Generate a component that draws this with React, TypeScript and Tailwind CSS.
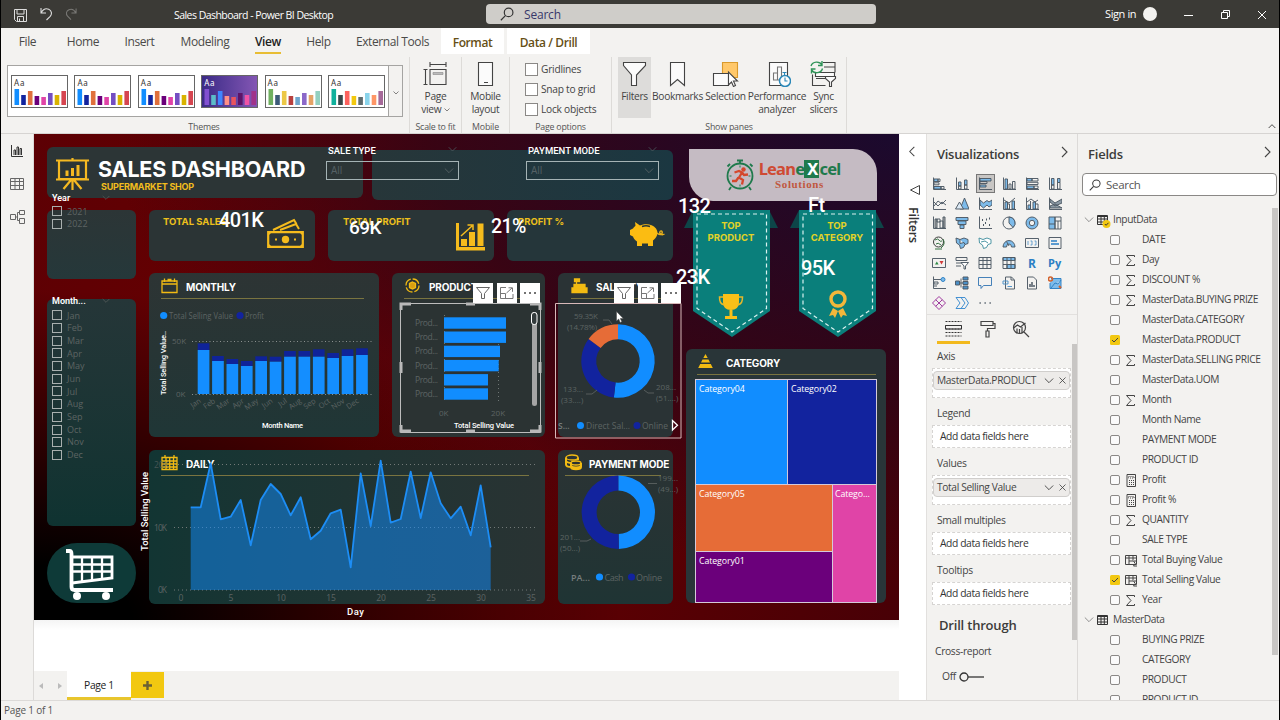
import type { ReactNode } from "react";

const tabs = [
  { label: "File", box: "w-[53px]" },
  { label: "Home", box: "w-[58px]" },
  { label: "Insert", box: "w-[55px]" },
  { label: "Modeling", box: "w-[76px]" },
  { label: "View", box: "w-[50px]" },
  { label: "Help", box: "w-[51px]" },
  { label: "External Tools", box: "w-[97px]" },
];

const classic = ["#118dff", "#12239e", "#e0703c", "#6b007b", "#e044a7", "#744ec2", "#d9b300", "#d64550"];
const themes = [
  { bg: "bg-white text-[#333]", bars: classic },
  { bg: "bg-white text-[#333]", bars: classic },
  { bg: "bg-white text-[#333]", bars: classic },
  { bg: "bg-gradient-to-r from-[#3b2a86] to-[#8456b4] text-white", bars: ["#8250d0", "#5bbcc9", "#3f86ff", "#ff8f86", "#e8545f", "#5c1368", "#f052a5", "#a0338a"] },
  { bg: "bg-white text-[#333]", bars: ["#70b060", "#3c5a78", "#ecc846", "#b8403f", "#6fa5cc", "#8b68c8", "#e5a367", "#93d0c0"] },
  { bg: "bg-white text-[#333]", bars: ["#10b09c", "#374649", "#fd625e", "#f2c80f", "#5f6b6d", "#8ad4eb", "#fe9666", "#a66999"] },
];
const themeHeights = [16, 10, 14, 9, 8, 12, 10, 14];

const Chevron = ({ d = "M1 3l5 5 5-5", size = 12, color = "#444" }: { d?: string; size?: number; color?: string }) => (
  <svg width={size} height={size} viewBox="0 0 12 12" fill="none" stroke={color} strokeWidth="1.1">
    <path d={d} />
  </svg>
);

const SearchIcon = ({ size = 13 }: { size?: number }) => (
  <svg width={size} height={size} viewBox="0 0 13 13" fill="none" stroke="#333" strokeWidth="1.1">
    <circle cx="8" cy="5" r="4" />
    <path d="M5 8L.8 12.3" />
  </svg>
);

function TitleBar() {
  return (
    <div className="flex h-7 items-center bg-[#3b3a36] text-[11px] text-white">
      <svg className="mt-0.5 ml-[13px]" width="13" height="13" viewBox="0 0 13 13" fill="none" stroke="#ddd" strokeWidth="1">
        <path d="M.5.5h12v12h-10l-2-2zM3 .5v4.500h7V.5M3.500 12.500v-5h6v5M5.500 12.500v-3" />
      </svg>
      <svg className="ml-[13px]" width="13" height="14" viewBox="0 0 13 14" fill="none" stroke="#ddd" strokeWidth="1.100">
        <path d="M1 1v5h5M1.300 5.700C3 2.500 6 1.200 8.700 2.300c3 1.300 3.600 4.600 1.500 7L6.500 13" />
      </svg>
      <svg className="ml-3" width="12" height="14" viewBox="0 0 13 14" fill="none" stroke="#7a7976" strokeWidth="1.100">
        <path d="M12 1v5H7M11.700 5.700C10 2.500 7 1.200 4.300 2.300c-3 1.300-3.600 4.600-1.500 7L6.500 13" />
      </svg>
      <span className="mt-[3px] ml-[97px] w-[312px] text-[10.500px] tracking-[-0.54px]">Sales Dashboard - Power BI Desktop</span>
      <div className="flex h-5 w-[390px] items-center gap-2.5 rounded-sm bg-[#cfcdc9] pl-3.5 text-xs text-[#38386a]">
        <SearchIcon size={14} />
        <span className="mt-px tracking-[-0.2px]">Search</span>
      </div>
      <span className="ml-[229px] w-[38px] tracking-[-0.4px]">Sign in</span>
      <span className="h-3.5 w-3.5 rounded-full bg-[#f3f2f0]" />
      <svg className="ml-[27px]" width="84" height="12" viewBox="0 0 84 12" fill="none" stroke="#fff">
        <path d="M0 7.500h9M37.500 4.500h6v6h-6zM39.500 4.500v-2h6v6h-2M74 3l8 8M82 3l-8 8" />
      </svg>
    </div>
  );
}

function TabRow() {
  return (
    <div className="flex h-[26px] text-[12px] tracking-[-0.4px] text-[#4a4a48]">
      {tabs.map((t) => (
        <div key={t.label} className={`flex justify-center pt-[5px] ${t.box} ${t.label === "View" ? "font-semibold text-[#222]" : ""}`}>
          <span className={t.label === "View" ? "border-b-2 border-[#e8bd34] whitespace-nowrap" : "whitespace-nowrap"}>{t.label}</span>
        </div>
      ))}
      <div className="flex w-[63px] justify-center bg-white pt-[6px] font-semibold text-[#665016]">Format</div>
      <div className="ml-[3px] flex w-[83px] justify-center bg-white pt-[6px] font-semibold text-[#665016]">Data / Drill</div>
    </div>
  );
}

function ThemeGallery() {
  return (
    <div className="flex h-[52px] w-[396px] border border-[#a5a4a2] bg-white">
      <div className="flex flex-1 items-center gap-[6.400px] pl-[3px]">
        {themes.map((t, i) => (
          <div key={i} className={`flex h-[33px] w-[57px] flex-col border border-[#666] px-0.5 ${t.bg}`}>
            <span className="mt-0.5 h-[11px] font-[Noto_Sans] text-[8px] leading-[10px] tracking-[0.8px]">Aa</span>
            <svg width="53" height="16" viewBox="0 0 53 16">
              {t.bars.map((c, j) => (
                <rect key={j} x={j * 6.7 + 0.5} y={16 - themeHeights[j]} width="4.600" height={themeHeights[j]} fill={c} />
              ))}
            </svg>
          </div>
        ))}
      </div>
      <div className="flex w-[14px] items-center justify-center border-l border-[#a5a4a2] bg-[#f3f2f0] pt-1">
        <Chevron size={6} color="#222" />
      </div>
    </div>
  );
}

function RibbonGroup({ label, box, children }: { label: string; box: string; children: ReactNode }) {
  return (
    <div className={`flex h-[76px] flex-col border-r border-[#dddbd8] ${box}`}>
      <div className="flex h-[66px] justify-center">{children}</div>
      <div className="text-center text-[8.800px] leading-3 tracking-[-0.2px] text-[#555]">{label}</div>
    </div>
  );
}

function RibbonButton({ icon, lines, box }: { icon: ReactNode; lines: ReactNode[]; box: string }) {
  return (
    <div className={`flex h-[61px] shrink-0 flex-col items-center pt-[3px] text-[10.200px] leading-[13px] tracking-[-0.3px] text-[#444] ${box}`}>
      <svg className="mb-[3px] shrink-0" width="27" height="27" viewBox="0 0 27 27" fill="none" stroke="#444" strokeWidth="1.100">
        {icon}
      </svg>
      {lines.map((l, i) => (
        <span key={i} className="whitespace-nowrap">{l}</span>
      ))}
    </div>
  );
}

function Ribbon() {
  return (
    <div className="flex h-20 border-b border-[#d6d4d2] pt-[3px] pl-[6px]">
      <div className="flex h-[76px] w-[403px] flex-col border-r border-[#dddbd8]">
        <div className="flex h-[66px] pt-[8px]">
          <ThemeGallery />
        </div>
        <div className="pr-2 text-center text-[8.800px] leading-3 tracking-[-0.2px] text-[#555]">Themes</div>
      </div>
      <RibbonGroup label="Scale to fit" box="w-[52px]">
        <RibbonButton
          box=""
          lines={["Page", <>view <span className="inline-block"><Chevron size={6} color="#222" /></span></>]}
          icon={
            <>
              <path d="M8 9.500h16v15H8zM8 4.500h16M8 2v5M24 2v5M3.500 9.500v15M1.500 9.500h4M1.500 24.500h4" />
              <path d="M11 12.500h10v2H11z" fill="#bbb" stroke="#888" strokeWidth=".6" />
            </>
          }
        />
      </RibbonGroup>
      <RibbonGroup label="Mobile" box="w-[48px]">
        <RibbonButton
          box=""
          lines={["Mobile", "layout"]}
          icon={<path d="M6.500 2.500h14v23h-14zM12 22.500h4" fill="#fbfbfb" />}
        />
      </RibbonGroup>
      <RibbonGroup label="Page options" box="w-[102px]">
        <div className="ml-[7px] flex w-[78px] flex-col gap-[7px] pt-[6px] text-[10.200px] tracking-[-0.25px] text-[#444]">
          {["Gridlines", "Snap to grid", "Lock objects"].map((l) => (
            <div key={l} className="flex h-[13px] items-center gap-[3px] whitespace-nowrap">
              <span className="h-[13px] w-[13px] shrink-0 border border-[#8a8886] bg-white" />
              {l}
            </div>
          ))}
        </div>
      </RibbonGroup>
      <RibbonGroup label="Show panes" box="w-[235px]">
        <RibbonButton
          box="w-[33px] bg-[#dddcda]"
          lines={["Filters"]}
          icon={<path d="M2.500 2.500h22v3l-9 9.500v10.500h-5V15l-8-9.500z" fill="#fbfbfb" />}
        />
        <RibbonButton box="w-[53px]" lines={["Bookmarks"]} icon={<path d="M6.500 2.500h14v23l-7-6-7 6z" fill="#fbfbfb" />} />
        <RibbonButton
          box="w-[43px]"
          lines={["Selection"]}
          icon={
            <>
              <path d="M10.500 2.500h15v15h-15z" fill="#ffc86a" stroke="#d99a2c" />
              <path d="M1.500 13.500h15v12h-15z" fill="#fbfbfb" />
              <path d="M16.500 12v13l3-3 2 4.500 2-1-2-4.500h4z" fill="#fff" />
            </>
          }
        />
        <RibbonButton
          box="w-[60px]"
          lines={["Performance", "analyzer"]}
          icon={
            <>
              <path d="M5.500 2.500h18v23h-18z" fill="#fbfbfb" />
              <path d="M9.500 20v-7h4v7zM13.500 20V7h4v13z" stroke="#777" />
              <path d="M20.500 13v2M18.500 12.500h4" stroke="#2b88b8" />
              <circle cx="21" cy="21" r="5.500" fill="#fbfbfb" stroke="#2b88b8" strokeWidth="1.500" />
              <path d="M21 17.500V21h2.500" stroke="#2b88b8" />
            </>
          }
        />
        <RibbonButton
          box="w-[33px]"
          lines={["Sync", "slicers"]}
          icon={
            <>
              <path d="M13 2.500h12v10M2.500 14.500v11h13M25 7H14M6 18.500h9" />
              <path d="M5.500 12.500h19v4h-19z" fill="#fbfbfb" />
              <path d="M15.500 16.500h10v2l-4 3.500v4.500h-2V22l-4-3.500z" fill="#fbfbfb" />
              <path d="M1 6a6 5.500 0 0 1 11-1M12 1v4.500H8M12.500 8.500a6 5.500 0 0 1-11 1.500M1.500 13.500V9H5.500" stroke="#2f9358" strokeWidth="1.400" />
            </>
          }
        />
      </RibbonGroup>
      <div className="flex flex-1 items-end justify-end pr-[3px] pb-[3px]">
        <Chevron size={8} d="M1 9l5-5 5 5" color="#111" />
      </div>
    </div>
  );
}

function LeftRail() {
  return (
    <div className="flex w-[33px] shrink-0 flex-col items-center gap-[19px] border-r border-[#dcdad8] pt-2.5">
      <svg width="14" height="14" viewBox="0 0 14 14" fill="none" stroke="#333">
        <path d="M1.500 1v11.500H13M4 11V6h1.500v5M7 11V3h1.500v8M10 11V4.500h1.500V11" />
      </svg>
      <svg width="14" height="14" viewBox="0 0 14 14" fill="none" stroke="#666">
        <path d="M.5 1.500h13v11H.5zM.5 4.500h13M.5 8.500h13M5 1.500v11M9.500 1.500v11" />
      </svg>
      <svg width="15" height="14" viewBox="0 0 15 14" fill="none" stroke="#666">
        <path d="M.5 4.500h5v5h-5zM9.500.5h5v4h-5zM9.500 8.500h5v5h-5zM5.500 7H7.500V2.500h2M7.500 7v3.500h2" />
      </svg>
    </div>
  );
}

/* ---------- report canvas ---------- */

const DIN = "font-[Roboto] text-white";

function Card({ at, children, tone = "bg-[#2b3435]" }: { at: string; children?: ReactNode; tone?: string }) {
  return <div className={`absolute rounded-md ${tone} ${at}`}>{children}</div>;
}

function CardTitle({ children, icon }: { children: ReactNode; icon: ReactNode }) {
  return (
    <div className="flex h-[26px] items-center gap-[8px] border-b border-[#7a7440] pt-[3px] font-[Inter] text-[10px] font-bold tracking-[-0.15px] whitespace-nowrap text-white">
      <svg className="-mt-[3px] shrink-0" width="17" height="17" viewBox="0 0 17 17" fill="none" stroke="#f2bb13" strokeWidth="1.300">
        {icon}
      </svg>
      {children}
    </div>
  );
}

function Slicer({ title, items, at, list }: { title: string; items: string[]; at: string; list: string }) {
  return (
    <div className={`absolute w-[66px] ${at}`}>
      <div className="flex items-center justify-between pr-2">
        <span className={`text-[9px] leading-3 font-semibold ${DIN}`}>{title}</span>
        <Chevron size={8} color="#59605f" />
      </div>
      <div className={`flex flex-col ${list}`}>
        {items.map((m) => (
          <div key={m} className="flex h-[12.700px] items-center gap-[5px] text-[9px] text-[#5d6463]">
            <span className="h-[10px] w-[10px] border border-[#a9b0af]" />
            {m}
          </div>
        ))}
      </div>
    </div>
  );
}

function DropSlicer({ title, at }: { title: string; at: string }) {
  return (
    <div className={`absolute w-[133px] ${at}`}>
      <div className="flex h-4 items-start justify-between pr-0.5 pl-0.5">
        <span className={`text-[9.500px] leading-3 font-medium ${DIN}`}>{title}</span>
        <Chevron size={9} color="#4d5a60" />
      </div>
      <div className="flex h-[19px] items-center justify-between border border-[#a5b3b5] pr-1 pl-1 text-[10px] text-[#566165]">
        All
        <Chevron size={10} color="#566165" />
      </div>
    </div>
  );
}

const light = [350, 361, 364, 366, 361, 361.7, 356.7, 356.7, 356.7, 358, 356, 355];
const dark = [343.3, 356, 359, 361, 356.3, 356.7, 351, 351, 349.3, 353, 349.3, 348.3];
const months = ["Jan", "Feb", "Mar", "Apr", "May", "Jun", "Jul", "Aug", "Sep", "Oct", "Nov", "Dec"];

function MonthlyChart() {
  return (
    <svg className="absolute top-0 left-0" width="230" height="164" viewBox="149 273 230 164" fontSize="8.500" fill="#5d6463">
      <circle cx="163.700" cy="315.500" r="3.600" fill="#118dff" />
      <text x="169" y="318.500" textLength="64" lengthAdjust="spacingAndGlyphs">Total Selling Value</text>
      <circle cx="240" cy="315.500" r="3.600" fill="#12239e" />
      <text x="245" y="318.500" textLength="19" lengthAdjust="spacingAndGlyphs">Profit</text>
      <text x="172" y="344" fontSize="8">50K</text>
      <text x="176" y="397" fontSize="8">0K</text>
      <path d="M192 341.500h182M192 394.500h182" stroke="#8a908f" strokeDasharray="1 2.500" />
      {light.map((y, i) => (
        <g key={i}>
          <rect x={197.700 + i * 14.400} y={dark[i]} width="11.700" height={y - dark[i]} fill="#0f2399" />
          <rect x={197.700 + i * 14.400} y={y} width="11.700" height={394 - y} fill="#148eff" />
        </g>
      ))}
      {months.map((m, i) => (
        <text key={m} x={201.500 + i * 14.350} y="402" textAnchor="end" fontSize="7.500" transform={`rotate(-35 ${201.500 + i * 14.350} 402)`}>{m}</text>
      ))}
      <g fill="#fff" fontFamily="Roboto" fontWeight="500">
        <text x="262" y="427.500" fontSize="7.500" textLength="41">Month Name</text>
        <text x="166" y="395" fontSize="7.500" textLength="64" transform="rotate(-90 166 395)">Total Selling Value..</text>
      </g>
    </svg>
  );
}

const productEnds = [506, 506, 500, 498.700, 488, 488];

function ProductChart() {
  return (
    <svg className="absolute top-0 left-0" width="153" height="164" viewBox="392 273 153 164" fontSize="8.500" fill="#5d6463">
      <path d="M444.500 315v86M498.500 344v60" stroke="#6f7675" strokeDasharray="1 3" />
      {productEnds.map((e, i) => (
        <g key={i}>
          <text x="415" y={326 + i * 14.200} textLength="23">Prod...</text>
          <rect x="444" y={317.300 + i * 14.200} width={e - 444} height="11.400" fill="#118dff" />
        </g>
      ))}
      <text x="439" y="415.500" fontSize="8">0K</text>
      <text x="491" y="415.500" fontSize="8">20K</text>
      <text x="454" y="428" fill="#fff" fontFamily="Roboto" fontWeight="500" fontSize="7.500" textLength="60">Total Selling Value</text>
      <rect x="532" y="312" width="5" height="94" rx="2.500" fill="#a5a5a5" />
      <rect x="531.500" y="312.500" width="5.500" height="12" rx="2.500" fill="#333b3c" stroke="#fff" />
      <path d="M400.500 303.500h140v129h-140z" fill="none" stroke="#bdbdbd" />
      <path d="M401 310v-6h10M530 304h10v6M540 425v6h-10M411 431h-10v-6M466 304h9M466 431h9M401 362v11M540 362v11" fill="none" stroke="#b9b9b9" strokeWidth="3" />
    </svg>
  );
}

// ring slice between two fractions of a full turn
function slice(cx: number, cy: number, from: number, to: number) {
  const pt = (f: number, r: number) => {
    const a = f * 2 * Math.PI - Math.PI / 2;
    return `${cx + r * Math.cos(a)} ${cy + r * Math.sin(a)}`;
  };
  const big = to - from > 0.5 ? 1 : 0;
  return `M${pt(from, 36.700)}A36.700 36.700 0 ${big} 1 ${pt(to, 36.700)}L${pt(to, 21.700)}A21.700 21.700 0 ${big} 0 ${pt(from, 21.700)}Z`;
}

function SaleTypeChart() {
  return (
    <svg className="absolute top-0 left-0 overflow-visible" width="115" height="164" viewBox="558 273 115 164" fontSize="8.500" fill="#5d6463">
      <path d="M555.500 303.500h125.500v134.500H555.500z" fill="none" stroke="#d8b9b9" />
      <path d={slice(618, 361, 0, 0.518)} fill="#118dff" />
      <path d={slice(618, 361, 0.518, 0.852)} fill="#12239e" />
      <path d={slice(618, 361, 0.852, 1)} fill="#e66c37" />
      <path d="M603 320h6l3 4M586 394h6l5-4M644 390l4 3h6" fill="none" stroke="#565d5c" />
      <g fontSize="8">
        <text x="574" y="319" textLength="24">59.35K</text>
        <text x="567" y="330" textLength="30">(14.78%)</text>
        <text x="563" y="392">133...</text>
        <text x="561" y="403">(33....)</text>
        <text x="656" y="390">208...</text>
        <text x="656" y="401">(51....)</text>
      </g>
      <text x="558" y="428.500" fontWeight="600" fill="#777e7d">S...</text>
      <circle cx="580.500" cy="425.500" r="3.500" fill="#118dff" />
      <text x="586" y="428.500" textLength="44">Direct Sal...</text>
      <circle cx="637" cy="425.500" r="3.500" fill="#12239e" />
      <text x="642" y="428.500" textLength="26">Online</text>
      <path d="M672.500 420.500v9.500l5-4.700z" fill="none" stroke="#fff" strokeWidth="1.300" />
    </svg>
  );
}

function PaymentChart() {
  return (
    <svg className="absolute top-0 left-0 overflow-visible" width="115" height="154" viewBox="558 450 115 154" fontSize="8" fill="#5d6463">
      <path d={slice(618.300, 512.300, 0, 0.498)} fill="#118dff" />
      <path d={slice(618.300, 512.300, 0.498, 0.9999)} fill="#12239e" />
      <path d="M648 483.500h9M580 541h7l4-2" fill="none" stroke="#565d5c" />
      <text x="658" y="481">199...</text>
      <text x="658" y="492">(49...)</text>
      <text x="560" y="540">201...</text>
      <text x="560" y="551">(50...)</text>
      <g fontSize="9">
        <text x="571" y="580.500" fontWeight="600" fill="#777e7d">PA...</text>
        <circle cx="599.500" cy="577" r="3.600" fill="#118dff" />
        <text x="604.500" y="580.500" textLength="19">Cash</text>
        <circle cx="631.500" cy="577" r="3.600" fill="#12239e" />
        <text x="636" y="580.500" textLength="26">Online</text>
      </g>
    </svg>
  );
}

const daily = [
  507.3, 507.3, 463.3, 519.3, 516.7, 500, 545.3, 500, 484, 494, 515.3, 497.3, 539.3, 530.7, 513.3, 509.7, 567.3, 473.3,
  526, 460.7, 522.7, 519, 471.7, 518, 472.3, 503.3, 518.3, 506.7, 535.3, 485.3, 547.3,
];
const dailyPath = daily.map((y, i) => `${190.700 + i * 10} ${y}`).join("L");

function DailyChart() {
  return (
    <svg className="absolute top-0 left-0 overflow-visible" width="396" height="154" viewBox="149 450 396 154" fontSize="8.500" fill="#5d6463">
      <path d="M174 464.500h362M174 527.500h362M174 590h362" stroke="#727978" strokeDasharray="1 3" />
      <path d={`M190.700 590L${dailyPath}V590Z`} fill="#118dff" fillOpacity=".5" />
      <path d={`M${dailyPath}`} fill="none" stroke="#1d8df5" strokeWidth="1.800" strokeLinejoin="round" />
      <text x="154" y="468" opacity=".7">20K</text>
      <text x="154" y="530.500" textLength="13">10K</text>
      <text x="158" y="593" textLength="9">0K</text>
      {[0, 5, 10, 15, 20, 25, 30, 35].map((d) => (
        <text key={d} x={181 + d * 10} y="601" textAnchor="middle">{d}</text>
      ))}
      <g fill="#fff" fontFamily="Roboto" fontWeight="500" fontSize="9.500">
        <text x="347" y="615" textLength="17">Day</text>
        <text x="148" y="551" textLength="79" transform="rotate(-90 148 551)">Total Selling Value</text>
      </g>
    </svg>
  );
}

function VisualButtons({ at }: { at: string }) {
  return (
    <div className={`absolute flex gap-[3.500px] ${at}`}>
      <div className="flex h-5 w-5 items-center justify-center bg-white">
        <svg width="14" height="14" viewBox="0 0 14 14" fill="none" stroke="#666"><path d="M.5 1.500h13L8.500 7.500v5h-3v-5z" /></svg>
      </div>
      <div className="flex h-5 w-5 items-center justify-center bg-white">
        <svg width="14" height="12" viewBox="0 0 14 12" fill="none" stroke="#777"><path d="M6 .5H.5v11h12.500V7M.5 6.500h5v5M6.500 6L12 1M8.500.8h4v4" /></svg>
      </div>
      <div className="flex h-5 w-5 items-center justify-center bg-white">
        <svg width="14" height="4" viewBox="0 0 14 4" fill="#444"><circle cx="2" cy="2" r="1" /><circle cx="7" cy="2" r="1" /><circle cx="12" cy="2" r="1" /></svg>
      </div>
    </div>
  );
}

function Pennant({ at, lines, children }: { at: string; lines: string[]; children: ReactNode }) {
  return (
    <div className={`absolute h-[128px] w-[94px] ${at}`}>
      <svg className="absolute top-0 left-0" width="94" height="128" viewBox="0 0 94 128" fill="none">
        <path d="M9 0L0 18h12zM85 0l9 18H82z" fill="#0d4548" />
        <path d="M9 0h77v101l-38 26-39-26z" fill="#0a7f7b" />
        <path d="M13 4h69.500v94.500L48 122 13 98.500z" stroke="#d9f2f0" strokeWidth="1.200" strokeDasharray="4 3" />
        {children}
      </svg>
      <div className="relative pt-2.5 text-center font-[Inter] text-[9.500px] leading-3 font-bold text-[#e2d327]">
        {lines.map((l) => (
          <div key={l}>{l}</div>
        ))}
      </div>
    </div>
  );
}

function Logo() {
  return (
    <div className="absolute top-[15px] left-[655px] flex h-[52px] w-[188px] items-center justify-center gap-1 rounded-tr-[24px] rounded-bl-[24px] bg-[#c5bbc3] pr-px">
      <svg width="30" height="34" viewBox="0 0 30 34" fill="none">
        <circle cx="15" cy="18" r="12.500" stroke="#1f7a4c" strokeWidth="1.800" />
        <path d="M12 2.500h6M15 2.500v3M25 6l2.500 2.500M5 6L2.500 8.500M6 29l-2 3M24 29l2 3" stroke="#1f7a4c" strokeWidth="1.800" />
        <path d="M15 7.500v2M15 26.500v2M4.500 18h2M23.500 18h2" stroke="#1f7a4c" />
        <circle cx="18.500" cy="11.500" r="2.200" fill="#d5472c" />
        <path d="M9.500 14.500l4.500-1.500 3 1.500-3 5 4 2.500-1 4.500M13.500 19.500l-2.500 3.500H7M17 14.500l2 2.500 4-.5" stroke="#d5472c" strokeWidth="2.300" />
      </svg>
      <div className="flex flex-col items-center">
        <div className="flex items-center font-[Noto_Sans] text-[16.500px] leading-[18px] font-bold tracking-[-0.8px] text-[#cf4a33]">
          <span>Lean</span>
          <span className="text-[#1f7a4c]">e</span>
          <span className="bg-[#1f7a4c] pr-0.5 pl-[3px] text-white">X</span>
          <span className="text-[#1f7a4c]">cel</span>
        </div>
        <div className="font-[Liberation_Serif] text-[11px] leading-3 font-bold tracking-[0.600px] text-[#c0573f]">Solutions</div>
      </div>
    </div>
  );
}

function Treemap() {
  return (
    <div className="absolute top-[30px] left-[9px] grid h-[224px] w-[182px] grid-rows-[104px_117px] gap-px border border-[#d5c9d9] bg-[#d5c9d9] text-[8.800px] leading-3 tracking-[-0.1px] text-white">
      <div className="grid grid-cols-[91px_1fr] gap-px">
        <div className="bg-[#118dff] pt-[3px] pl-[3px]">Category04</div>
        <div className="bg-[#12239e] pt-[3px] pl-[3px]">Category02</div>
      </div>
      <div className="grid grid-cols-[136px_1fr] gap-px">
        <div className="grid grid-rows-[66px_1fr] gap-px">
          <div className="bg-[#e66c37] pt-[3px] pl-[3px]">Category05</div>
          <div className="bg-[#6b007b] pt-[3px] pl-[3px]">Category01</div>
        </div>
        <div className="overflow-hidden bg-[#e044a7] pt-[3px] pl-[2px]">Catego...</div>
      </div>
    </div>
  );
}

function Kpi({ at, children }: { at: string; children: ReactNode }) {
  return <div className={`absolute leading-5 font-medium tracking-[-0.6px] ${DIN} ${at}`}>{children}</div>;
}

function ReportCanvas() {
  return (
    <div className="relative h-[486px] shrink-0 bg-[radial-gradient(ellipse_at_0%_100%,#000_8%,transparent_48%),radial-gradient(ellipse_at_100%_0%,#1b0a2e_0%,#2c0518cc_38%,transparent_64%),linear-gradient(115deg,#5c0004,#6c0000_45%,#480006)]">
      <Card at="top-[13px] left-[13px] h-[51px] w-[316px]" tone="bg-[#2c3536]" />
      <Card at="top-4 left-[338px] h-[50px] w-[301px]" tone="bg-gradient-to-r from-[#273639] to-[#1b3741]" />
      <svg className="absolute top-6 left-[22px]" width="33" height="33" viewBox="0 0 33 33" fill="none" stroke="#f5b921" strokeWidth="2.200">
        <path d="M0 2.500h33M3 2.500V21h27V2.500M0 21.500h33M16.500 0v2M16.500 21v11M15 22L7.500 31M18 22l7.500 9" />
        <path d="M9.500 12.500h3V18h-3zM15 10h3v8h-3zM20.500 7h3v11h-3z" fill="#f5b921" stroke="none" />
      </svg>
      <div className="absolute top-[23px] left-16 font-[Inter] text-[21.500px] leading-[25px] font-bold tracking-[-0.200px] whitespace-nowrap text-white">SALES DASHBOARD</div>
      <div className="absolute top-[47px] left-[67px] font-[Inter] text-[9px] leading-3 font-bold tracking-[-0.2px] whitespace-nowrap text-[#f2bd1d]">SUPERMARKET SHOP</div>
      <DropSlicer at="top-[11px] left-[292px]" title="SALE TYPE" />
      <DropSlicer at="top-[11px] left-[492px]" title="PAYMENT MODE" />

      <Card at="top-[76px] left-[13px] h-[69px] w-[89px]" tone="bg-gradient-to-b from-[#2c3536] to-[#25383a]" />
      <Card at="top-[165px] left-[13px] h-[227px] w-[89px]" tone="bg-gradient-to-b from-[#253638] to-[#0f3331]" />
      <Slicer at="top-[58px] left-[18px]" list="mt-[1px]" title="Year" items={["2021", "2022"]} />
      <Slicer at="top-[161px] left-[18px]" list="mt-[2px]" title="Month..." items={months} />

      <Card at="top-[76px] left-[115px] h-[50.500px] w-[166px]" />
      <Card at="top-[76px] left-[294px] h-[50.500px] w-[166px]" tone="bg-[#2a3537]" />
      <Card at="top-[76px] left-[473px] h-[50.500px] w-[166px]" tone="bg-[#25363a]" />
      <div className="absolute top-[82px] left-[129px] font-[Inter] text-[9.500px] leading-3 font-bold text-[#edc01c]">TOTAL SALES</div>
      <div className="absolute top-[82px] left-[309px] font-[Inter] text-[9.500px] leading-3 font-bold text-[#edc01c]">TOTAL PROFIT</div>
      <div className="absolute top-[82px] left-[484px] font-[Inter] text-[9.500px] leading-3 font-bold text-[#edc01c]">PROFIT %</div>
      <svg className="absolute top-[84px] left-[233px]" width="37" height="33" viewBox="0 0 37 33" fill="none" stroke="#f5bb1d" strokeWidth="2.200">
        <path d="M1.200 14.200h34.600v14.600H1.200z" />
        <path d="M6 12L27 2l2.500 4M13 12l16-6 3 5" strokeWidth="2" />
        <circle cx="18.500" cy="21.500" r="3.700" fill="#f5bb1d" stroke="none" />
        <path d="M8 20.500h2v2H8zM27 20.500h2v2h-2z" fill="#f5bb1d" stroke="none" />
        <path d="M1 14l4 0-4 4zM36 14v4l-4-4zM1 29v-4l4 4zM36 29h-4l4-4z" fill="#f5bb1d" stroke="none" />
      </svg>
      <svg className="absolute top-[88px] left-[422px]" width="29" height="31" viewBox="0 0 29 31" fill="#f5bb1d">
        <path d="M0 1h3v24h26v3.500H0zM5 17h6v7H5zM13 10h6v14h-6zM21.500 1.500h6V24h-6z" />
        <path d="M5 14L16 4M11.500 3H17v5" fill="none" stroke="#f5bb1d" strokeWidth="1.500" />
      </svg>
      <svg className="absolute top-[86px] left-[595px]" width="36" height="28" viewBox="0 0 36 28" fill="#fbbc12">
        <path d="M6 2l5 3.500c5-2 12-2 16 3 3 4.500 1 9-3 12V26h-5v-2.500h-6V26H8v-4.500C5.500 20 4.500 18 4 16.500L1 15v-5l3-1.500c1-1.500 2-2 2.500-3z" />
        <path d="M13 6.500q4-1.500 8 0" fill="none" stroke="#25363a" strokeWidth="1.400" />
        <path d="M28 13c3 3 6 1 5-1.500-1-1.500-3 0-2 2 1 1.500 3 1.500 4.500.5" fill="none" stroke="#e9b11b" strokeWidth="1.400" />
      </svg>

      <Card at="top-[139px] left-[115px] h-[164px] w-[230px]" tone="bg-gradient-to-b from-[#2d3434] to-[#1f3636]">
        <div className="w-[215px] pl-3">
          <CardTitle icon={<path d="M1 4h15v11.500H1zM1 7h15M3.500 1.500V5M13.500 1.500V5M6.500 2.500h4" />}>MONTHLY</CardTitle>
        </div>
        <MonthlyChart />
      </Card>
      <Card at="top-[139px] left-[358px] h-[164px] w-[153px]" tone="bg-[#2b3333]">
        <div className="w-[140px] pl-3">
          <CardTitle
            icon={
              <>
                <circle cx="8.500" cy="8.500" r="6.500" strokeDasharray="8 2" />
                <path d="M8.500 5l3 1.500v4L8.500 12l-3-1.500v-4z" fill="#d79e12" />
              </>
            }
          >
            PRODUCT
          </CardTitle>
        </div>
        <ProductChart />
      </Card>
      <Card at="top-[139px] left-[524px] h-[164px] w-[115px]" tone="bg-[#2a3335]">
        <div className="w-[105px] pl-[13px]">
          <CardTitle icon={<path d="M1 11h15v4.500H1zM3 7.500h11v3H3zM5.500 3.500v4M3.500 2h5v2.500h-5z" fill="#f2bb13" />}>SALES TYPE</CardTitle>
        </div>
        <SaleTypeChart />
      </Card>
      <VisualButtons at="top-[149px] left-[439px]" />
      <VisualButtons at="top-[149px] left-[580px]" />

      <Card at="top-[316px] left-[115px] h-[154px] w-[396px]" tone="bg-gradient-to-r from-[#123533] to-[#293333]">
        <div className="w-[380px] pl-3">
          <CardTitle icon={<path d="M1 3.500h15v12H1zM1 7h15M1 10h15M1 13h15M5 3.500v12M8.700 3.500v12M12.500 3.500v12M4 1v3M13 1v3" />}>DAILY</CardTitle>
        </div>
        <DailyChart />
      </Card>
      <Card at="top-[316px] left-[524px] h-[154px] w-[115px]" tone="bg-gradient-to-b from-[#2b3334] to-[#1f3434]">
        <div className="w-[103px] pl-[7px]">
          <CardTitle
            icon={
              <>
                <ellipse cx="7" cy="3.500" rx="6" ry="2.500" />
                <path d="M1 3.500v7c0 1.500 3 2.500 6 2.500M1 7c1 1.500 3 2 6 2M13 3.500V6" strokeWidth="2" />
                <ellipse cx="11" cy="9" rx="5" ry="2" fill="#2a3133" />
                <path d="M6 9v4c0 3 10 3 10 0V9M6 12c2 2 8 2 10 0" strokeWidth="2" />
              </>
            }
          >
            <span className="-ml-px">PAYMENT MODE</span>
          </CardTitle>
        </div>
        <PaymentChart />
      </Card>

      <Logo />
      <Pennant at="top-[76px] left-[650px]" lines={["TOP", "PRODUCT"]}>
        <path d="M39 84h16v8c0 5-3 8-8 8s-8-3-8-8zM45.500 99h3v7h-3zM41 106h12v3H41z" fill="#f8c018" />
        <path d="M39 87h-3.500c0 5 1 7 5 8M55 87h3.500c0 5-1 7-5 8" stroke="#e6b82a" strokeWidth="1.500" />
      </Pennant>
      <Pennant at="top-[76px] left-[756px]" lines={["TOP", "CATEGORY"]}>
        <circle cx="48" cy="89" r="7" stroke="#f3b73b" strokeWidth="3.400" />
        <path d="M43 98l-4 8 4-1 2 3 3-7zM53 98l4 8-4-1-2 3-3-7z" fill="#f3b73b" />
      </Pennant>

      <Card at="top-[215px] left-[652px] h-[254px] w-[200px]" tone="bg-[#293538]">
        <div className="w-[190px] pl-[11px]">
          <CardTitle icon={<path d="M8.500 1l2.200 4H6.300zM5.500 6.500h6l1.500 3H4zM3.200 11h10.600l2 4H1.200z" fill="#f2bb13" stroke="none" />}>
            <span className="ml-1">CATEGORY</span>
          </CardTitle>
        </div>
        <Treemap />
      </Card>

      <div className="absolute top-[409px] left-[13px] h-[60px] w-[89px] rounded-[30px] bg-[#0e3a38]">
        <svg className="mt-1 ml-[18px]" width="50" height="54" viewBox="0 0 50 54" fill="none" stroke="#fff">
          <path d="M1 4h3.500q2 0 2 3v33q0 3 3 3H48" strokeWidth="3.800" />
          <path d="M7 10h40v21L7 36" strokeWidth="2.800" />
          <path d="M7 17.500h40M7 24.500h40M17 10v24M27 10v23M37 10v22" strokeWidth="2.300" />
          <circle cx="12" cy="49" r="4" fill="#fff" stroke="none" />
          <circle cx="41" cy="49" r="4" fill="#fff" stroke="none" />
        </svg>
      </div>

      <Kpi at="top-[76px] left-[185px] text-[20px]">401K</Kpi>
      <Kpi at="top-[84px] left-[315px] text-[19px]">69K</Kpi>
      <Kpi at="top-[83px] left-[457px] text-[19.500px]">21%</Kpi>
      <Kpi at="top-[62px] left-[644px] text-[20px]">132</Kpi>
      <Kpi at="top-[61px] left-[774px] text-[20px]">Ft</Kpi>
      <Kpi at="top-[133px] left-[642px] text-[20px]">23K</Kpi>
      <Kpi at="top-[124px] left-[767px] text-[20px]">95K</Kpi>

      <svg className="absolute top-[177px] left-[582px]" width="8" height="12" viewBox="0 0 8 12" fill="#fff" stroke="#444" strokeWidth=".5">
        <path d="M.5.5v9.500l2.200-2 1.500 3.500 1.600-.7-1.500-3.300h3z" />
      </svg>
    </div>
  );
}

function PageTabs() {
  return (
    <div className="flex h-[29px] bg-[#f3f2f0]">
      <div className="flex w-[33px] items-center justify-between px-[5px]">
        <svg width="5" height="6" viewBox="0 0 5 6" fill="#bbb"><path d="M4 0v6L0 3z" /></svg>
        <svg width="5" height="6" viewBox="0 0 5 6" fill="#bbb"><path d="M1 0v6l4-3z" /></svg>
      </div>
      <div className="flex w-16 items-center justify-center border-b-[3px] border-[#e8c52d] bg-white pt-[4px] text-[10.300px] tracking-[-0.35px] text-[#222]">Page 1</div>
      <div className="mt-px flex h-[26px] w-[33px] items-center justify-center bg-[#f2c811]">
        <svg width="9" height="9" viewBox="0 0 9 9" stroke="#6b6134" strokeWidth="2.400"><path d="M0 4.500h9M4.500 0v9" /></svg>
      </div>
    </div>
  );
}

/* ---------- visualizations pane ---------- */

const B = "#7dbbea";
const ax = <path d="M1.500.5v12H14" />;
const vizIcons: ReactNode[] = [
  <>{ax}<path d="M2 2h4v2.500H2zM2 9.500h7V12H2z" fill={B} /><path d="M6 2h2v2.500H6zM2 5.800h5v2H2zM9 9.500h3V12H9z" /></>,
  <>{ax}<path d="M3.500 5h2.500v4H3.500zM9.500 3H12v5H9.500z" fill={B} /><path d="M3.500 9H6v3H3.500zM9.500 8H12v4H9.500z" /></>,
  <>{ax}<path d="M2 1.500h11v2.500H2zM2 8h6v2H2z" fill={B} /><path d="M2 4.500h7v2H2z" /></>,
  <>{ax}<path d="M3 2h2.500v10H3z" fill={B} /><path d="M7 7h2v5H7zM10.500 4.500H13V12h-2.500z" /></>,
  <>{ax}<path d="M2 1.500h5V4H2zM2 9h7v2.500H2z" fill={B} /><path d="M7 1.500h6V4H7zM2 5.300h11v2.200H2zM9 9h4v2.500H9z" /></>,
  <>{ax}<path d="M3.500 1.500H6V8H3.500zM9.500 1.500H12v4H9.500z" fill={B} /><path d="M3.500 8H6v4H3.500zM9.500 5.500H12V12H9.500z" /></>,
  <>{ax}<path d="M2 9l4-5 4 3 4-4M2 5l4 4 4-4 4 3" /></>,
  <><path d="M5 12l4.500-11L14 12z" fill={B} /><path d="M.5 12l4-7 4 7z" fill="#dce9f4" /></>,
  <>{ax}<path d="M2 3l3.500 3L9 3.500l2 1.500 3-2v5l-3 2-2-2-3.500 3L2 8z" fill={B} /></>,
  <>{ax}<path d="M3 5h2.500v7H3zM10 4h2.500v8H10z" fill={B} /><path d="M5.500 7h2v5h-2zM2 3l5 3 6-5" /></>,
  <>{ax}<path d="M3 8h2.500v4H3zM8 5h2.500v7H8z" fill={B} /><path d="M5.500 4v8M10.500 7H13v5h-2.500M2 5l4-3 4 3 3-2" /></>,
  <>{ax}<path d="M2 2l5 4 7-4v4l-7 3-5-4zM2 9l5-2 7 4H2z" fill="#8c9aa5" /></>,
  <>{ax}<path d="M3 3h2v9H3zM11 1h2v11h-2z" fill="#aaa" /><path d="M5 3h3v3H5zM8 5h3v7H8z" /></>,
  <><path d="M1 1.500h12v3H1zM3 5h8v3.500H3zM5 9h4v3.500H5z" fill={B} /></>,
  <>{ax}<path d="M4 4h1M7 7h1M11 2.500h1M11 9h1M5 9h1M8 3.500h1" strokeWidth="1.800" /></>,
  <><circle cx="7" cy="7" r="6" /><path d="M7 7V1a6 6 0 0 1 4 10.500z" fill={B} /></>,
  <><circle cx="7" cy="7" r="6" fill={B} /><circle cx="7" cy="7" r="2.700" fill="#f3f2f0" /></>,
  <><path d="M1 1h6v12H1z" fill={B} /><path d="M7 1h6v12H7zM7 5h6M10 5v8M1 8h6" /></>,
  <><circle cx="6.500" cy="6" r="5" stroke="#333" /><path d="M3 4q3-2 4 0t3 1M4 8q2-2 5 1M3 13h7M11 3q3 5-2 9" stroke="#2d6b3a" /></>,
  <path d="M1 2l4 1.500 4-1.500 4 1.500v4l-3 1-1.500 3-3 1-1-3.500-3-2zM5 3.500v4l4-1 1 2" fill={B} />,
  <path d="M1 2l4 1.500 4-1.500 4 1.500v4l-3 1-1.500 3-3 1-1-3.500-3-2zM3 6l4-1 3 2" fill="#fff" stroke="#45909f" />,
  <><path d="M1 11a6 6.500 0 0 1 12 0h-3.500a2.500 3 0 0 0-5 0z" fill={B} /><path d="M7 10L4.500 5.500" /></>,
  <><path d="M.5 2.500h13v9H.5z" /><path d="M3 5v4M5.500 5h1.500v4H5.500M9.500 5H11v4H9.500" stroke="#4a90c8" strokeWidth=".8" /></>,
  <><path d="M1 1.500h12v11H1z" /><path d="M3 5h6M3 8h8" stroke="#2b7fc4" strokeWidth="1.500" /></>,
  <><path d="M.5 2.500h13v9H.5z" /><path d="M3 8.500l1.800-3 1.800 3z" fill="#2d8a46" stroke="none" /><path d="M7.500 5h4l-2 3.500z" fill="#d13a3a" stroke="none" /></>,
  <><path d="M1 1.500h11v3H1zM1 7h6M1 10h5" /><path d="M6 6.500h7.500L10.500 10v3H9v-3z" fill="#fff" /></>,
  <path d="M1 1.500h12v11H1zM1 4.500h12M1 8.500h12M5 1.500v11M9 1.500v11" />,
  <><path d="M5 8.500h8v4H5zM1 1.500h12v3H1z" fill={B} /><path d="M1 1.500h12v11H1zM1 8.500h12M5 1.500v11M9 1.500v11" /></>,
  <text x="3" y="12" fontSize="12" fontWeight="700" fill="#2b7fc4" stroke="none">R</text>,
  <text x="0" y="11" fontSize="11" fontWeight="700" fill="#2b7fc4" stroke="none">Py</text>,
  <>{ax}<path d="M2 3.500h7M2 6h4v2H2zM2 10h3" /><circle cx="11" cy="3.500" r="2" fill={B} stroke="#2b7fc4" /></>,
  <><path d="M.5 5h4v4h-4zM8 1h5v3H8zM8 5.500h5v3H8zM8 10h5v3H8z" fill="#4a90c8" /><path d="M4.500 7H8M6 2.500v9" /></>,
  <path d="M.5 1.500h13v8h-8L3 12.500v-3H.5z" stroke="#3b7ab5" />,
  <><path d="M3.500 1h6l3 3v9h-9zM9 1v3h3" /><path d="M1 5h5v3H1zM5.500 10.500H10" stroke="#4a90c8" /></>,
  <><path d="M2.500 1h6l3 3v9h-9z" /><path d="M5 11V8M7 11V6M9 11V9" strokeWidth="1.500" /></>,
  <><path d="M3 2.500h10v10H2V7M3 12l4-5 3 1 3-4" fill={B} stroke="#2b7fc4" /><circle cx="2.500" cy="3" r="2" stroke="#d3622d" strokeWidth="1.500" /><path d="M11 10l2 2" stroke="#d3622d" strokeWidth="2" /></>,
  <path d="M7 .5L13.500 7 7 13.500.5 7zM3.700 3.700l6.600 6.600M10.300 3.700l-6.600 6.600" stroke="#9a2f9a" />,
  <path d="M1 1.500h5L10 7l-4 5.500H1L5 7zM6 1.500h4L13.500 7 10 12.500H6" stroke="#3b8bd0" />,
  <path d="M1.500 7h1.300M6.500 7h1.300M11.500 7h1.300" strokeWidth="1.500" />,
];

function Well({ label, value, top }: { label: string; value?: string; top: string }) {
  return (
    <div className={top}>
      <div className="h-[19px] pl-[5px] text-[10.300px] leading-[15px] tracking-[-0.3px] text-[#444]">{label}</div>
      <div className={`border border-dashed border-[#d6d4d2] bg-white ${value ? "h-[30px] pt-[2px] pl-0" : "h-[23px] pt-[3px] pl-[7px]"}`}>
        {value ? (
          <div className="flex h-[19px] w-[137px] items-center rounded-sm border border-[#d0cecc] bg-[#edebe9] pl-[3px] text-[10.200px] tracking-[-0.35px] text-[#444]">
            <span className="w-[107px] whitespace-nowrap">{value}</span>
            <Chevron size={10} />
            <span className="w-1" />
            <Chevron size={9} d="M2 2l8 8M10 2l-8 8" />
          </div>
        ) : (
          <div className="text-[10.300px] leading-[15px] tracking-[-0.4px] text-[#333]">Add data fields here</div>
        )}
      </div>
    </div>
  );
}

function VisualizationsPane() {
  return (
    <div className="flex w-[151px] shrink-0 flex-col border-r border-[#dcdad8]">
      <div className="flex h-[40px] shrink-0 items-center justify-between pr-[7px] pl-2.5 text-[13px] font-semibold text-[#3c3c3a]">
        <span className="mt-px tracking-[-0.300px]">Visualizations</span>
        <span className="-mt-1"><Chevron d="M4 1l5 5-5 5" /></span>
      </div>
      <div className="grid h-[140px] shrink-0 grid-cols-[repeat(6,23.300px)] grid-rows-[repeat(7,19.800px)]">
        {vizIcons.map((icon, i) => (
          <div key={i} className="flex items-center justify-center">
            <div className={i === 2 ? "flex h-[19px] w-[19px] items-center justify-center border border-[#777] bg-[#c8c6c4]" : ""}>
              <svg width="14" height="14" viewBox="0 0 14 14" fill="none" stroke="#4d5964" strokeWidth=".95">{icon}</svg>
            </div>
          </div>
        ))}
      </div>
      <div className="flex h-[30px] shrink-0 items-end border-t border-[#e2e0de] pl-2.5">
        <div className="flex h-[29px] w-[33px] items-center justify-center border-b-[3px] border-[#f2b91d]">
          <svg width="17" height="17" viewBox="0 0 17 17" fill="none" stroke="#333"><path d="M.5 1.500h16M.5 5.500h16M.5 9h16M.5 12.500h16M.5 16h16" strokeDasharray="2 1" /><path d="M.5 5.500h16V9H.5z" /></svg>
        </div>
        <svg className="mb-1.5 ml-[10px]" width="16" height="18" viewBox="0 0 16 18" fill="none" stroke="#444" strokeWidth="1.200"><path d="M1 1.500h12v4H1zM13 3.500h2v5H7.500V11M6 11h3v6H6z" /></svg>
        <svg className="mb-1.5 ml-[16px]" width="18" height="18" viewBox="0 0 18 18" fill="none" stroke="#444" strokeWidth="1.200"><circle cx="7.500" cy="7.500" r="6" /><path d="M12 12l5 5M1.500 8l4-3 3 2 5-4M5 13V8.500M7.500 13.500V9M10 13V7" /></svg>
      </div>
      <div className="relative flex flex-1 flex-col overflow-hidden pr-[6px] pl-[5px]">
        <Well top="mt-[5px]" label="Axis" value="MasterData.PRODUCT" />
        <Well top="mt-[8px]" label="Legend" />
        <Well top="mt-[8px]" label="Values" value="Total Selling Value" />
        <Well top="mt-[8px]" label="Small multiples" />
        <Well top="mt-[8px]" label="Tooltips" />
        <div className="mt-[11px] pl-[7px] text-[13px] leading-[18px] font-semibold tracking-[-0.200px] text-[#3c3c3a]">Drill through</div>
        <div className="mt-[10px] pl-[3px] text-[10.300px] leading-[15px] tracking-[-0.35px] text-[#444]">Cross-report</div>
        <div className="mt-[10px] flex items-center gap-[3px] pl-2.5 text-[10.300px] leading-[15px] tracking-[-0.3px] text-[#444]">
          Off
          <svg width="26" height="10" viewBox="0 0 26 10" fill="none" stroke="#333" strokeWidth="1.300"><circle cx="5" cy="5" r="4" /><path d="M9 5h16" /></svg>
        </div>
        <div className="absolute top-0 right-0 h-[296px] w-[5px] bg-[#c8c6c4]" />
      </div>
    </div>
  );
}

/* ---------- fields pane ---------- */

type Field = { name: string; icon?: "sum" | "calc" | "col"; on?: boolean };

const inputFields: Field[] = [
  { name: "DATE" },
  { name: "Day", icon: "sum" },
  { name: "DISCOUNT %", icon: "sum" },
  { name: "MasterData.BUYING PRIZE", icon: "sum" },
  { name: "MasterData.CATEGORY" },
  { name: "MasterData.PRODUCT", on: true },
  { name: "MasterData.SELLING PRICE", icon: "sum" },
  { name: "MasterData.UOM" },
  { name: "Month", icon: "sum" },
  { name: "Month Name" },
  { name: "PAYMENT MODE" },
  { name: "PRODUCT ID" },
  { name: "Profit", icon: "calc" },
  { name: "Profit %", icon: "calc" },
  { name: "QUANTITY", icon: "sum" },
  { name: "SALE TYPE" },
  { name: "Total Buying Value", icon: "col" },
  { name: "Total Selling Value", icon: "col", on: true },
  { name: "Year", icon: "sum" },
];
const masterFields: Field[] = [{ name: "BUYING PRIZE" }, { name: "CATEGORY" }, { name: "PRODUCT" }, { name: "PRODUCT ID" }];

const fieldIcons = {
  sum: <path d="M9.500 3V1.500H1.500L6 6.500l-4.500 5h8V10" />,
  calc: <><path d="M2 .5h8.500v12H2z" /><path d="M3.500 2.500h5.500v1.500H3.500zM4 6.500h5.500M4 8.500h5.500M4 10.500h5.500" strokeDasharray="1 1" /></>,
  col: <><path d="M.5 1.500h11v9H.5zM.5 4h11M4 1.500v9M8 1.500v5M4 7h4" /><path d="M12 7H8.500l1.700 2.500L8.500 12H12" /></>,
};

function FieldRow({ f }: { f: Field }) {
  return (
    <div className="flex h-5 shrink-0 items-center pl-8">
      {f.on ? (
        <svg width="10" height="10" viewBox="0 0 10 10"><rect width="10" height="10" rx="1.500" fill="#f2c811" /><path d="M2 5l2 2 4-4" fill="none" stroke="#444" /></svg>
      ) : (
        <span className="h-[10px] w-[10px] rounded-[2px] border border-[#8a8886] bg-[#fafafa]" />
      )}
      <svg className="mx-[5px]" width="12" height="13" viewBox="0 0 12 13" fill="none" stroke="#444">{f.icon && fieldIcons[f.icon]}</svg>
      <span className="whitespace-nowrap">{f.name}</span>
    </div>
  );
}

function TableRow({ name, badge }: { name: string; badge?: boolean }) {
  return (
    <div className="flex h-5 shrink-0 items-center pl-1.5">
      <Chevron size={10} color="#888" />
      <svg className="ml-0.5" width="16" height="16" viewBox="0 0 16 16" fill="none" stroke="#333">
        <path d="M1.500 3.500h10v9h-10zM1.500 4.500h10M1.500 7h10M1.500 10h10M5 3.500v9M8.300 3.500v9" />
        {badge && <><circle cx="10.500" cy="12" r="4" fill="#f2c811" stroke="none" /><path d="M8.800 12l1.300 1.300 2.400-2.500" /></>}
      </svg>
      <span className="ml-px">{name}</span>
    </div>
  );
}

function FieldsPane() {
  return (
    <div className="relative flex flex-1 flex-col overflow-hidden">
      <div className="flex h-[39px] shrink-0 items-center justify-between pr-[6px] pl-2.5 text-[13px] font-semibold tracking-[-0.200px] text-[#3c3c3a]">
        <span className="mt-0.5">Fields</span>
        <span className="-mt-1"><Chevron d="M4 1l5 5-5 5" /></span>
      </div>
      <div className="mr-0.5 ml-1 flex h-[23px] shrink-0 items-center gap-[5px] rounded-sm border border-[#8a8886] bg-white pl-1.5 text-[11.500px] tracking-[-0.3px] text-[#555]">
        <SearchIcon size={12} />
        Search
      </div>
      <div className="flex shrink-0 flex-col pt-[14px] text-[10.200px] tracking-[-0.4px] text-[#444]">
        <TableRow name="InputData" badge />
        {inputFields.map((f) => <FieldRow key={f.name} f={f} />)}
        <TableRow name="MasterData" />
        {masterFields.map((f) => <FieldRow key={f.name} f={f} />)}
      </div>
      <div className="absolute top-[74px] right-[1px] h-[447px] w-1.5 bg-[#c8c6c4]" />
    </div>
  );
}

export default function App() {
  return (
    <div className="flex h-[720px] w-[1280px] flex-col overflow-hidden border-x border-black bg-[#f3f2f0] font-['Open_Sans',sans-serif]">
      <TitleBar />
      <TabRow />
      <Ribbon />
      <div className="flex h-[566px]">
        <LeftRail />
        <div className="flex w-[865px] shrink-0 flex-col">
          <ReportCanvas />
          <div className="h-[51px] bg-gradient-to-b from-[#f4f4f4] to-white to-20%" />
          <PageTabs />
        </div>
        <div className="flex w-[28px] shrink-0 flex-col items-center border-r border-[#e2e0de] bg-white">
          <div className="pt-3"><Chevron d="M8 1L3 6l5 5" size={11} /></div>
          <svg className="mt-7 ml-1" width="10" height="10" viewBox="0 0 10 10" fill="none" stroke="#444"><path d="M9.500.5v9L.5 5z" /></svg>
          <div className="mt-3 text-[12.500px] font-semibold tracking-[-0.200px] text-[#333] [writing-mode:vertical-rl]">Filters</div>
        </div>
        <VisualizationsPane />
        <FieldsPane />
      </div>
      <div className="h-5 border-t border-[#dcdad8] pl-[3px] text-[10px] leading-[19px] tracking-[-0.2px] text-[#555]">Page 1 of 1</div>
    </div>
  );
}
